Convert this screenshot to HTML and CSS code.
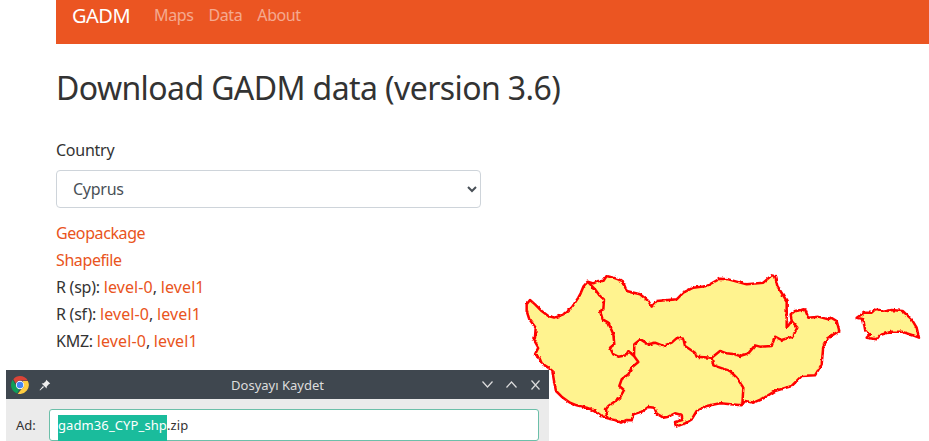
FILE: index.html
```html
<!DOCTYPE html>
<html lang="en">
  <head>
    <meta charset="UTF-8" />
    <title>GADM data</title>
    <link rel="stylesheet" href="styles.css">
  </head>

  <body>
    <div class="page">
      <nav class="navbar">
        <a class="brand" href="#">GADM</a>
        <a class="navlink" href="#">Maps</a>
        <a class="navlink" href="#">Data</a>
        <a class="navlink" href="#">About</a>
      </nav>

      <h1>Download GADM data (version 3.6)</h1>

      <div class="row">
        <div class="form">
          <label class="label" for="country">Country</label>
          <select class="select" id="country">
            <option>Cyprus</option>
          </select>
          <ul class="downloads">
            <li class="format"><a href="#">Geopackage</a></li>
            <li class="format"><a href="#">Shapefile</a></li>
            <li>R (sp): <a class="level" href="#">level-0</a>, <a class="level" href="#">level1</a></li>
            <li>R (sf): <a class="level" href="#">level-0</a>, <a class="level" href="#">level1</a></li>
            <li>KMZ: <a class="level" href="#">level-0</a>, <a class="level" href="#">level1</a></li>
          </ul>
        </div>

        <svg class="map" viewBox="0 0 1230 528" width="410" height="176">
          <filter id="rough" x="-5%" y="-5%" width="110%" height="110%" filterUnits="objectBoundingBox">
            <feTurbulence type="fractalNoise" baseFrequency="0.09" numOctaves="2" seed="4" />
            <feDisplacementMap in="SourceGraphic" scale="9" xChannelSelector="R" yChannelSelector="G" />
          </filter>
          <g filter="url(#rough)">
            <path class="land" d="M203 47 L190 62 L182 82 L175 95 L155 125 L130 145 L105 155 L85 150 L65 135 L45 115 L30 102 L20 115 L20 135 L28 160 L47 185 L45 215 L42 222 L55 245 L45 265 L58 275 L65 292 L85 305 L97 315 L103 350 L108 375 L125 392 L150 410 L170 418 L200 425 L225 435 L245 450 L260 457 L285 462 L303 470 L320 462 L335 463 L340 445 L365 437 L385 423 L403 425 L410 443 L430 455 L445 452 L465 442 L485 447 L487 462 L465 468 L468 482 L495 472 L515 460 L530 435 L560 420 L600 412 L665 418 L675 405 L700 410 L730 397 L765 375 L815 360 L845 330 L885 328 L905 295 L910 240 L925 215 L958 195 L950 165 L933 155 L925 160 L895 152 L865 155 L855 130 L825 135 L812 145 L815 165 L800 185 L800 105 L772 60 L765 30 L755 28 L730 50 L680 55 L625 40 L600 38 L560 60 L520 65 L490 80 L470 100 L410 105 L395 122 L385 105 L360 85 L320 75 L308 45 L280 35 L260 30 L250 45 L235 45 L220 52 Z" />
            <path class="land" d="M1010 155 L1032 140 L1055 140 L1068 128 L1090 137 L1115 132 L1148 135 L1175 160 L1190 185 L1197 215 L1185 210 L1145 197 L1115 197 L1080 207 L1070 220 L1040 215 L1050 205 L1035 190 L1030 160 Z" />
            <path class="border" d="M203 47 L225 70 L238 88 L252 100 L250 130 L240 135 L248 160 L265 170 L280 205 L283 235 L270 245 L280 265 L295 272 L318 268 L325 255 L342 270 L355 288 L335 305 L325 325 L305 340 L298 360 L312 372 L300 395 L265 420 L258 430 L262 457" />
            <path class="border" d="M342 270 L343 235 L362 220 L385 235 L405 230 L430 240 L455 230 L472 215 L490 218 L495 240 L525 260 L530 272 L575 275 L600 255 L620 262 L645 265 L660 270 L685 262 L705 238 L720 242 L755 240 L765 212 L785 222 L818 212 L832 185 L815 165" />
            <path class="border" d="M575 275 L580 298 L600 305 L630 315 L650 335 L670 365 L667 415" />
          </g>
        </svg>
      </div>
    </div>

    <div class="dialog">
      <div class="titlebar">
        <svg class="chrome" viewBox="0 0 20 20" width="18" height="18">
          <path fill="#db4437" d="M10 0a10 10 0 0 1 8.66 5H10a5 5 0 0 0-4.7 3.3L2.6 3.6A10 10 0 0 1 10 0z" />
          <path fill="#0f9d58" d="M1.9 4.2l4.3 7.4a4.5 4.5 0 0 0 3.2 3.1L6.8 19.5A10 10 0 0 1 1.9 4.2z" />
          <path fill="#ffcd40" d="M18.7 5.5A10 10 0 0 1 7.5 19.7l4.3-5.2a5 5 0 0 0 2-6.5l-.8-2.5z" />
          <circle cx="10" cy="10" r="4.6" fill="#fff" />
          <circle cx="10" cy="10" r="3.6" fill="#4285f4" />
        </svg>
        <svg class="pin" viewBox="0 0 12 12" width="12" height="12">
          <path fill="#eee" d="M7.2 0.8 L11.2 4.6 L9.8 5.2 L7.8 7.6 L7.6 9.6 L2.6 4.6 L4.6 4.2 L6.8 2.2 Z M4 7 L5 8 L1 11.4 L0.6 11 Z" />
        </svg>
        <span class="dialogtitle">Dosyayı Kaydet</span>
        <div class="controls">
          <svg viewBox="0 0 11 7" width="11" height="7"><path d="M0.5 0.5 L5.5 6 L10.5 0.5" /></svg>
          <svg viewBox="0 0 11 7" width="11" height="7"><path d="M0.5 6.5 L5.5 1 L10.5 6.5" /></svg>
          <svg class="close" viewBox="0 0 9 10" width="9" height="10"><path d="M0.5 0.5 L8.5 9.5 M8.5 0.5 L0.5 9.5" /></svg>
        </div>
      </div>
      <div class="dialogbody">
        <span class="adlabel">Ad:</span>
        <div class="filename"><span class="selected">gadm36_CYP_shp</span>.zip</div>
      </div>
    </div>
  </body>
</html>
```

FILE: styles.css
```css
html, body {
  height: 100%;
}
body {
  margin: 0;
  overflow: hidden;
  font-family: "Noto Sans", sans-serif;
  font-size: 16px;
  color: #333;
}
a {
  color: #e95420;
  text-decoration: none;
}
.page {
  padding-left: 56px;
  letter-spacing: -0.25px;
}
.navbar {
  display: flex;
  align-items: center;
  height: 44px;
  padding: 0 0 14px 16px;
  box-sizing: border-box;
  background-color: #eb5522;
}
.brand {
  color: #fff;
  font-size: 20px;
  margin-right: 24px;
  letter-spacing: -0.5px;
}
.navlink {
  color: rgba(255, 255, 255, 0.5);
  margin-right: 15px;
  letter-spacing: -0.4px;
}
h1 {
  margin: 20px 0 0;
  font-size: 32px;
  font-weight: 400;
  line-height: 48px;
  letter-spacing: -0.6px;
}
.row {
  display: flex;
  margin-top: 26px;
}
.form {
  width: 425px;
  flex-shrink: 0;
}
.label {
  display: block;
  line-height: 24px;
  margin-bottom: 8px;
}
.select {
  display: block;
  width: 100%;
  height: 38px;
  padding: 0 12px;
  border: 1px solid #ced4da;
  border-radius: 4px;
  background-color: #fff;
  font: inherit;
  letter-spacing: inherit;
  color: #495057;
}
.downloads {
  list-style: none;
  margin: 12px 0 0;
  padding: 0;
  line-height: 27px;
}
.format {
  letter-spacing: -0.4px;
}
.level {
  letter-spacing: 0.1px;
}
.map {
  flex-shrink: 0;
  margin: 128px 0 0 39px;
}
.land {
  fill: #fff38f;
  stroke: #f00;
  stroke-width: 7.5;
  stroke-linejoin: round;
}
.border {
  fill: none;
  stroke: #f00;
  stroke-width: 7.5;
  stroke-linejoin: round;
}

/* save dialog sits on top of the page */
.dialog {
  position: absolute;
  left: 6px;
  top: 370px;
  width: 543px;
  height: 71px;
  overflow: hidden;
  background-color: #ebebeb;
  font-size: 13px;
}
.titlebar {
  position: relative;
  display: flex;
  align-items: center;
  gap: 10px;
  height: 29px;
  padding: 0 9px 0 5px;
  box-sizing: border-box;
  background-color: #3f474f;
}
.dialogtitle {
  position: absolute;
  left: 0;
  right: 0;
  text-align: center;
  color: #ddd;
}
.controls {
  position: relative;
  display: flex;
  align-items: center;
  gap: 13px;
  margin-left: auto;
}
.controls path {
  fill: none;
  stroke: #ddd;
  stroke-width: 1.2;
}
.close {
  margin-left: 1px;
}
.dialogbody {
  display: flex;
  align-items: flex-start;
  padding: 10px 10px 0 10px;
}
.adlabel {
  width: 33px;
  line-height: 32px;
  color: #333;
}
.filename {
  flex: 1;
  height: 32px;
  box-sizing: border-box;
  padding: 5px 8px 0;
  border: 1px solid #6cbfa9;
  border-radius: 3px;
  background-color: #fff;
  font-size: 13px;
  line-height: 20px;
  letter-spacing: 0.1px;
  color: #333;
}
.selected {
  display: inline-block;
  padding-bottom: 6px;
  vertical-align: top;
  background-color: #1abc9c;
  color: #fff;
}
```
